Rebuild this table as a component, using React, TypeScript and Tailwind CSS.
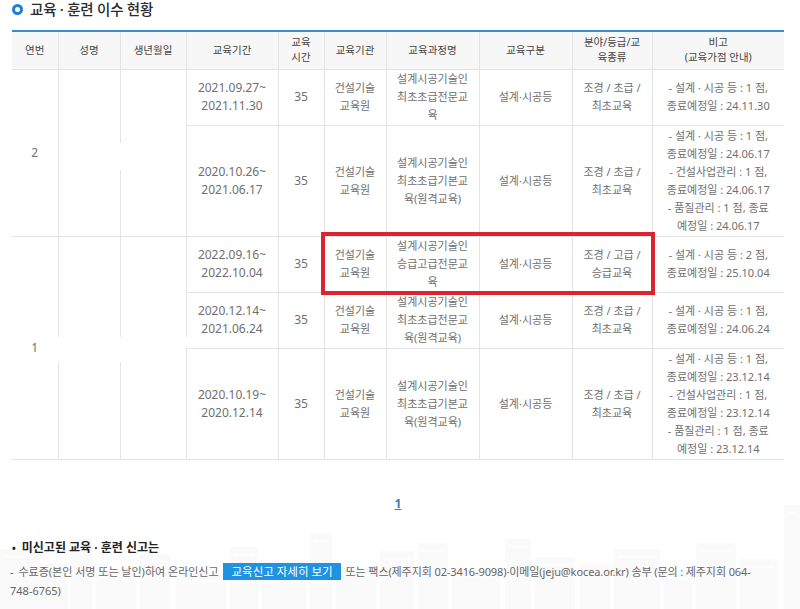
import React from "react";

type Row = {
  no?: string;
  span?: number;
  date: string[];
  course: string[];
  field: string[];
  note: string[];
  h: number;
};

const rows: Row[] = [
  {
    no: "2",
    span: 2,
    date: ["2021.09.27~", "2021.11.30"],
    course: ["설계시공기술인", "최초초급전문교", "육"],
    field: ["조경 / 초급 /", "최초교육"],
    note: ["- 설계 · 시공 등 : 1 점,", "종료예정일 : 24.11.30"],
    h: 56,
  },
  {
    date: ["2020.10.26~", "2021.06.17"],
    course: ["설계시공기술인", "최초초급기본교", "육(원격교육)"],
    field: ["조경 / 초급 /", "최초교육"],
    note: [
      "- 설계 · 시공 등 : 1 점,",
      "종료예정일 : 24.06.17",
      "- 건설사업관리 : 1 점,",
      "종료예정일 : 24.06.17",
      "- 품질관리 : 1 점, 종료",
      "예정일 : 24.06.17",
    ],
    h: 111,
  },
  {
    no: "1",
    span: 3,
    date: ["2022.09.16~", "2022.10.04"],
    course: ["설계시공기술인", "승급고급전문교", "육"],
    field: ["조경 / 고급 /", "승급교육"],
    note: ["- 설계 · 시공 등 : 2 점,", "종료예정일 : 25.10.04"],
    h: 56,
  },
  {
    date: ["2020.12.14~", "2021.06.24"],
    course: ["설계시공기술인", "최초초급전문교", "육(원격교육)"],
    field: ["조경 / 초급 /", "최초교육"],
    note: ["- 설계 · 시공 등 : 1 점,", "종료예정일 : 24.06.24"],
    h: 56,
  },
  {
    date: ["2020.10.19~", "2020.12.14"],
    course: ["설계시공기술인", "최초초급기본교", "육(원격교육)"],
    field: ["조경 / 초급 /", "최초교육"],
    note: [
      "- 설계 · 시공 등 : 1 점,",
      "종료예정일 : 23.12.14",
      "- 건설사업관리 : 1 점,",
      "종료예정일 : 23.12.14",
      "- 품질관리 : 1 점, 종료",
      "예정일 : 23.12.14",
    ],
    h: 111,
  },
];

const Lines = ({ lines }: { lines: string[] }) => (
  <>
    {lines.map((l, i) => (
      <div key={i} className="whitespace-nowrap">
        {l}
      </div>
    ))}
  </>
);

const td = "border border-[#e4e4e4] text-center align-middle px-1 p-0";
const th =
  "border border-[#e4e4e4] text-center align-middle font-normal px-1 p-0 text-[10.5px] leading-[15px] text-[#444]";

function Skyline() {
  const b = [
    [0, 40, 60], [38, 30, 45], [70, 22, 70], [96, 40, 40], [140, 30, 55],
    [176, 50, 35], [230, 28, 62], [262, 44, 48], [310, 22, 75], [336, 40, 42],
    [380, 34, 58], [418, 30, 66], [452, 48, 40], [505, 26, 70], [535, 40, 52],
    [580, 30, 45], [614, 46, 60], [664, 28, 38], [696, 40, 66], [740, 38, 50],
    [784, 16, 104],
  ];
  return (
    <svg
      className="absolute left-0 bottom-0 pointer-events-none"
      width="800"
      height="110"
      viewBox="0 0 800 110"
    >
      {b.map(([x, w, h], i) => (
        <rect key={i} x={x} y={110 - h} width={w} height={h} fill="#fafafa" />
      ))}
      {b.map(([x, w, h], i) => (
        <rect
          key={"w" + i}
          x={x + 4}
          y={110 - h + 6}
          width={Math.max(w - 8, 2)}
          height={3}
          fill="#fdfdfd"
        />
      ))}
    </svg>
  );
}

export default function App() {
  return (
    <div
      className="relative w-[800px] h-[609px] overflow-hidden bg-white text-[#707070]"
      style={{ fontFamily: '"Noto Sans", "Noto Sans CJK KR", sans-serif' }}
    >
      <Skyline />
      <div className="relative pl-3 pt-[1px]">
        {/* Title */}
        <div className="flex items-center h-[17px] gap-[7px]">
          <span className="block w-[11px] h-[11px] rounded-full border-[3px] border-[#1c7fd3] bg-white" />
          <span className="text-[14.5px] leading-[17px] font-medium text-[#2a2a2a] tracking-[-0.2px]">
            교육 · 훈련 이수 현황
          </span>
        </div>

        {/* Table */}
        <table className="mt-[12px] w-[772px] table-fixed border-collapse border-t-2 border-t-[#3a8dcf]">
          <colgroup>
            <col className="w-[46px]" />
            <col className="w-[62px]" />
            <col className="w-[66px]" />
            <col className="w-[92px]" />
            <col className="w-[46px]" />
            <col className="w-[62px]" />
            <col className="w-[93px]" />
            <col className="w-[93px]" />
            <col className="w-[80px]" />
            <col className="w-[132px]" />
          </colgroup>
          <thead>
            <tr className="h-[38px] bg-[#f7f7f7]">
              <th className={th + " border-l-0 border-t-0"}>연번</th>
              <th className={th + " border-t-0"}>성명</th>
              <th className={th + " border-t-0"}>생년월일</th>
              <th className={th + " border-t-0"}>교육기간</th>
              <th className={th + " border-t-0"}>
                교육
                <br />
                시간
              </th>
              <th className={th + " border-t-0"}>교육기관</th>
              <th className={th + " border-t-0"}>교육과정명</th>
              <th className={th + " border-t-0"}>교육구분</th>
              <th className={th + " border-t-0"}>
                분야/등급/교
                <br />
                육종류
              </th>
              <th className={th + " border-r-0 border-t-0"}>
                비고
                <br />
                (교육가점 안내)
              </th>
            </tr>
          </thead>
          <tbody className="text-[11px] leading-[18px]">
            {rows.map((r, i) => (
              <tr key={i} style={{ height: r.h }}>
                {r.no && (
                  <>
                    <td rowSpan={r.span} className={td + " border-l-0 text-[12px]"}>
                      {r.no}
                    </td>
                    <td rowSpan={r.span} className={td}></td>
                    <td rowSpan={r.span} className={td}></td>
                  </>
                )}
                <td className={td + " text-[12px]"}>
                  <Lines lines={r.date} />
                </td>
                <td className={td + " text-[12px]"}>35</td>
                <td className={td}>
                  <Lines lines={["건설기술", "교육원"]} />
                </td>
                <td className={td}>
                  <Lines lines={r.course} />
                </td>
                <td className={td}>설계·시공등</td>
                <td className={td}>
                  <Lines lines={r.field} />
                </td>
                <td className={td + " border-r-0"}>
                  <Lines lines={r.note} />
                </td>
              </tr>
            ))}
          </tbody>
        </table>

        {/* Pagination */}
        <div className="mt-[36px] w-[772px] flex justify-center">
          <span className="text-[12px] leading-[16px] font-bold underline text-[#3b7bc0]">1</span>
        </div>

        {/* Notice */}
        <div className="mt-[27px] flex items-center gap-[6px] text-[12px] leading-[18px] font-bold text-[#222]">
          <span className="text-[10px]">•</span>
          <span>미신고된 교육 · 훈련 신고는</span>
        </div>
        <div className="mt-[5px] -ml-[2px] text-[11px] leading-[19px] text-[#666]">
          <div className="whitespace-nowrap">
            <span className="mr-[2px]">-</span> 수료증(본인 서명 또는 날인)하여 온라인신고{" "}
            <span className="inline-block h-[17px] leading-[17px] px-[8px] mx-[2px] bg-[#1f92e2] text-white text-[11.5px]">
              교육신고 자세히 보기
            </span>{" "}
            <span className="tracking-[-0.1px]">
              또는 팩스(제주지회 02-3416-9098)·이메일(jeju@kocea.or.kr) 송부 (문의 : 제주지회 064-
            </span>
          </div>
          <div>748-6765)</div>
        </div>
      </div>

      {/* redaction patches */}
      <div className="absolute left-[114px] top-[143px] w-[12px] h-[27px] bg-white" />
      <div className="absolute left-[52px] top-[337px] w-[76px] h-[25px] bg-white" />
      <div className="absolute left-[182px] top-[337px] w-[8px] h-[10px] bg-white" />

      {/* highlight box */}
      <div className="absolute left-[321px] top-[232px] w-[334px] h-[63px] border-[4px] border-[#dc2430]" />
    </div>
  );
}
